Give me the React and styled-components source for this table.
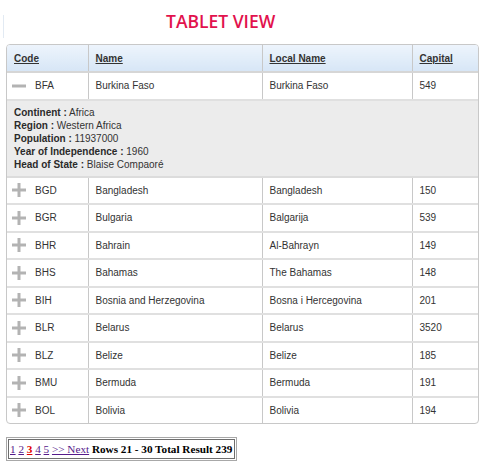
import React from "react"
import styled, { createGlobalStyle } from "styled-components"

const GlobalStyle = createGlobalStyle`
  body {
    margin: 0;
    background: #fff;
    font-family: "Liberation Sans", Arial, sans-serif;
  }
`;

const rows = [
  ["BGD", "Bangladesh", "Bangladesh", "150"],
  ["BGR", "Bulgaria", "Balgarija", "539"],
  ["BHR", "Bahrain", "Al-Bahrayn", "149"],
  ["BHS", "Bahamas", "The Bahamas", "148"],
  ["BIH", "Bosnia and Herzegovina", "Bosna i Hercegovina", "201"],
  ["BLR", "Belarus", "Belarus", "3520"],
  ["BLZ", "Belize", "Belize", "185"],
  ["BMU", "Bermuda", "Bermuda", "191"],
  ["BOL", "Bolivia", "Bolivia", "194"],
];

const details = [
  ["Continent", "Africa"],
  ["Region", "Western Africa"],
  ["Population", "11937000"],
  ["Year of Independence", "1960"],
  ["Head of State", "Blaise Compaoré"],
];

function Toggle({ open }) {
  return (
    <Icon viewBox="0 0 14 14">
      <rect x="0" y="5.5" width="14" height="3" fill="#b3b3b3" />
      {!open && <rect x="5.5" y="0" width="3" height="14" fill="#b3b3b3" />}
    </Icon>
  );
}

export default function App() {
  return (
    <Page>
      <GlobalStyle />
      <TitleBar>
        <Marker />
        <Title>TABLET VIEW</Title>
      </TitleBar>

      <TableBox>
        <Grid>
          <colgroup>
            <col style={{ width: 81 }} />
            <col style={{ width: 174 }} />
            <col style={{ width: 150 }} />
            <col />
          </colgroup>
          <thead>
            <tr>
              <HeadCell>Code</HeadCell>
              <HeadCell>Name</HeadCell>
              <HeadCell>Local Name</HeadCell>
              <HeadCell>Capital</HeadCell>
            </tr>
          </thead>
          <tbody>
            <tr>
              <Cell>
                <CodeWrap>
                  <Toggle open />
                  BFA
                </CodeWrap>
              </Cell>
              <Cell>Burkina Faso</Cell>
              <Cell>Burkina Faso</Cell>
              <Cell>549</Cell>
            </tr>
            <tr>
              <DetailCell colSpan={4}>
                {details.map(([k, v]) => (
                  <Line key={k}>
                    <b>{k} :</b> {v}
                  </Line>
                ))}
              </DetailCell>
            </tr>
            {rows.map((r, i) => (
              <tr key={r[0]}>
                <Cell $last={i === rows.length - 1}>
                  <CodeWrap>
                    <Toggle />
                    {r[0]}
                  </CodeWrap>
                </Cell>
                <Cell $last={i === rows.length - 1}>{r[1]}</Cell>
                <Cell $last={i === rows.length - 1}>{r[2]}</Cell>
                <Cell $last={i === rows.length - 1}>{r[3]}</Cell>
              </tr>
            ))}
          </tbody>
        </Grid>
      </TableBox>

      <Pager>
        <PagerInner>
          <PageLink href="#">1</PageLink> <PageLink href="#">2</PageLink>{" "}
          <Current>3</Current> <PageLink href="#">4</PageLink>{" "}
          <PageLink href="#">5</PageLink> <PageLink href="#">&gt;&gt; Next</PageLink>{" "}
          <b>Rows 21 - 30 Total Result 239</b>
        </PagerInner>
      </Pager>
    </Page>
  );
}

const Page = styled.div`
  padding: 0 8px 0 6px;
  width: 473px;
`;

const TitleBar = styled.div`
  display: flex;
  align-items: flex-start;
  height: 44px;
  margin-left: -3px;
`;

const Marker = styled.div`
  width: 1px;
  height: 23px;
  margin-top: 15px;
  background: #e2eaf3;
`;

const Title = styled.h1`
  margin: 9px 0 0 162px;
  font-family: "Open Sans", sans-serif;
  font-weight: 600;
  font-size: 17.5px;
  line-height: 24px;
  color: #e2124d;
`;

const TableBox = styled.div`
  border: 1px solid #c8c8c8;
  border-radius: 4px;
  overflow: hidden;
`;

const Grid = styled.table`
  width: 100%;
  border-collapse: collapse;
  table-layout: fixed;
  font-size: 10px;
  color: #333;
`;

const HeadCell = styled.th`
  height: 26px;
  padding: 0 7px;
  text-align: left;
  font-weight: bold;
  text-decoration: underline;
  background: linear-gradient(#edf4fc, #d7e6f6);
  border-left: 1px solid #c8c8c8;
  border-bottom: 2px solid #d6d6d6;
  &:first-child { border-left: none; }
`;

const Cell = styled.td`
  height: 25.5px;
  padding: 0 7px;
  border-left: 1px solid #c8c8c8;
  border-bottom: ${(p) => (p.$last ? "none" : "2px solid #e0e0e0")};
  white-space: nowrap;
  &:first-child { border-left: none; padding-left: 5px; }
`;

const CodeWrap = styled.span`
  display: flex;
  align-items: center;
  gap: 9px;
`;

const Icon = styled.svg`
  width: 14px;
  height: 14px;
  flex: none;
`;

const DetailCell = styled.td`
  background: #ececec;
  padding: 5px 7px 5px 7px;
  border-bottom: 2px solid #dcdcdc;
`;

const Line = styled.div`
  line-height: 13px;
  b { color: #2a2a2a; }
`;

const Pager = styled.div`
  display: inline-block;
  margin-top: 13px;
  border: 1px solid #a8a8a8;
  padding: 1px;
`;

const PagerInner = styled.div`
  border: 1px solid #6e6e6e;
  padding: 1px 2px 1px 1px;
  font-family: "Liberation Serif", "Times New Roman", serif;
  font-size: 11.2px;
  line-height: 16px;
  color: #000;
`;

const PageLink = styled.a`
  color: #551a8b;
`;

const Current = styled.span`
  color: #e00000;
  font-weight: bold;
  text-decoration: underline;
`;
